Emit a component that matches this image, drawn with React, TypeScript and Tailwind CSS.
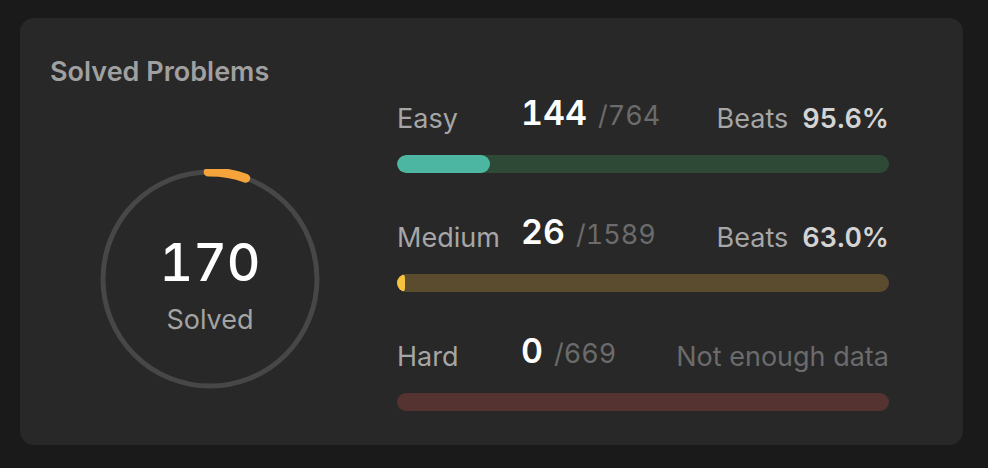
import React from "react";

const font = { fontFamily: "Inter, 'Noto Sans', sans-serif" };

type Row = {
  label: string;
  solved: number;
  total: number;
  beats?: string;
  track: string;
  fill: string;
};

const rows: Row[] = [
  { label: "Easy", solved: 144, total: 764, beats: "95.6%", track: "bg-[#2e4a36]", fill: "bg-[#4db6a3]" },
  { label: "Medium", solved: 26, total: 1589, beats: "63.0%", track: "bg-[#5b4c2f]", fill: "bg-[#f7c33f]" },
  { label: "Hard", solved: 0, total: 669, track: "bg-[#553330]", fill: "bg-[#e8524a]" },
];

function Ring() {
  const r = 107;
  const c = 2 * Math.PI * r;
  const frac = 20.5 / 360;
  return (
    <div className="relative w-[220px] h-[220px]">
      <svg width="220" height="220" viewBox="0 0 220 220">
        <circle cx="110" cy="110" r={r} fill="none" stroke="#474747" strokeWidth="5" />
        <circle
          cx="110"
          cy="110"
          r={r}
          fill="none"
          stroke="#f5a33b"
          strokeWidth="9"
          strokeLinecap="round"
          strokeDasharray={`${c * frac} ${c}`}
          transform="rotate(-91 110 110)"
        />
      </svg>
      <div className="absolute inset-0 flex flex-col items-center pt-[66px]">
        <div className="text-[52px] leading-[56px] text-white font-medium tabular-nums">170</div>
        <div className="text-[27px] leading-[30px] text-[#a3a3a3] mt-[14px]">Solved</div>
      </div>
    </div>
  );
}

export default function App() {
  return (
    <div className="w-[988px] h-[468px] bg-[#1a1a1a] pt-[18px] pl-[20px]" style={font}>
      <div className="w-[943px] h-[427px] rounded-[14px] bg-[#282828] flex">
        <div className="w-[377px] flex flex-col">
          <div className="pl-[30px] pt-[38px] text-[27px] leading-[32px] font-semibold text-[#a0a0a0]">
            Solved Problems
          </div>
          <div className="ml-[80px] mt-[81px]">
            <Ring />
          </div>
        </div>
        <div className="w-[492px] pt-[78px] flex flex-col gap-[42px]">
          {rows.map((row) => {
            const pct = (row.solved / row.total) * 100;
            return (
              <div key={row.label} className="flex flex-col">
                <div className="h-[40px] flex items-baseline">
                  <div className="w-[124px] text-[27px] leading-[40px] text-[#a6a6a6]">{row.label}</div>
                  <div className="text-[34px] leading-[40px] font-semibold text-white tabular-nums -translate-y-[3px]">
                    {row.solved}
                  </div>
                  <div className="ml-[11px] text-[27px] leading-[40px] text-[#6b6b6b] tabular-nums -translate-y-[3px]">
                    /{row.total}
                  </div>
                  <div className="ml-auto flex items-baseline">
                    {row.beats ? (
                      <>
                        <span className="text-[27px] leading-[40px] text-[#a6a6a6]">Beats</span>
                        <span className="ml-[14px] text-[27px] leading-[40px] font-semibold text-[#d4d4d4] tabular-nums">
                          {row.beats}
                        </span>
                      </>
                    ) : (
                      <span className="text-[27px] leading-[40px] text-[#6b6b6b]">Not enough data</span>
                    )}
                  </div>
                </div>
                <div className={`mt-[19px] h-[18px] w-full rounded-full overflow-hidden ${row.track}`}>
                  {row.solved > 0 && (
                    <div className={`h-full rounded-full ${row.fill}`} style={{ width: `${pct}%` }} />
                  )}
                </div>
              </div>
            );
          })}
        </div>
      </div>
    </div>
  );
}
